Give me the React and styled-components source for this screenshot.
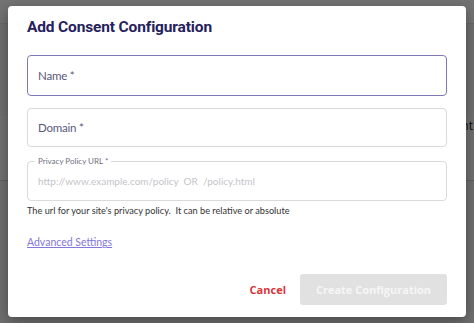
import React from "react";
import styled, { createGlobalStyle } from "styled-components";

const Global = createGlobalStyle`
  html, body { margin: 0; padding: 0; }
  body { width: 474px; height: 323px; overflow: hidden; font-family: Lato, "Noto Sans", sans-serif; }
  * { box-sizing: border-box; }
`;

const Page = styled.div`
  position: relative;
  width: 474px;
  height: 323px;
  background: #f6f6f6;
  display: flex;
  flex-direction: column;
  overflow: hidden;
`;

const TopBar = styled.div`
  height: 24px;
  background: #ffffff;
  border-bottom: 1px solid #e6e6e6;
`;

const Content = styled.div`
  flex: 1;
  display: flex;
  flex-direction: column;
  padding-top: 92px;
`;

const BgRow = styled.div`
  height: 65px;
  padding-right: 1px;
  padding-top: 3px;
  display: flex;
  justify-content: flex-end;
  align-items: flex-start;
  font-family: "Open Sans", sans-serif;
  font-size: 12px;
  line-height: 14px;
  color: #222;
  border-bottom: 1px solid #d8d8d8;
  white-space: nowrap;
  background: #fbfbfb;
`;

const Backdrop = styled.div`
  position: absolute;
  inset: 0;
  background: rgba(0, 0, 0, 0.55);
`;

const Modal = styled.div`
  position: absolute;
  left: 8px;
  top: 6px;
  width: 458px;
  height: 311px;
  background: #ffffff;
  border-radius: 4px;
  box-shadow: 0 4px 14px rgba(0, 0, 0, 0.35);
  padding: 10px 19px 12px 19px;
  display: flex;
  flex-direction: column;
`;

const Title = styled.h2`
  margin: 0;
  font-family: Roboto, "Noto Sans", sans-serif;
  font-weight: 700;
  font-size: 15.5px;
  line-height: 22px;
  letter-spacing: -0.15px;
  color: #25215c;
`;

const Field = styled.div`
  height: ${(p) => p.$h || 39}px;
  margin-top: ${(p) => p.$mt || 0}px;
  border: 1px solid ${(p) => (p.$focus ? "#7c79b6" : "#dadada")};
  border-radius: 4px;
  display: flex;
  align-items: center;
  padding: 0 10px;
`;

const FieldLabel = styled.span`
  font-size: 11.5px;
  color: #5a587a;
  letter-spacing: -0.2px;
`;

const Fieldset = styled.fieldset`
  margin: 10px 0 0 0;
  height: 44px;
  border: 1px solid #dadada;
  border-radius: 4px;
  padding: 0 10px;
  min-width: 0;
`;

const Legend = styled.legend`
  font-size: 8px;
  color: #6e6e7e;
  padding: 0 3px;
  margin-left: -3px;
  line-height: 8px;
`;

const Input = styled.input`
  display: block;
  border: none;
  outline: none;
  width: 100%;
  height: 32px;
  padding: 0;
  font-family: Lato, "Noto Sans", sans-serif;
  font-size: 10px;
  background: transparent;
  &::placeholder {
    color: #c4c4c8;
    white-space: pre;
  }
`;

const Helper = styled.div`
  margin-top: 4px;
  font-size: 9.2px;
  line-height: 12px;
  color: #333;
  white-space: pre;
`;

const Link = styled.a`
  margin-top: 18px;
  font-size: 10.5px;
  line-height: 14px;
  color: #8377dd;
  text-decoration: underline;
  align-self: flex-start;
  cursor: pointer;
`;

const Actions = styled.div`
  margin-top: auto;
  display: flex;
  justify-content: flex-end;
  align-items: center;
  gap: 14px;
`;

const TextButton = styled.button`
  border: none;
  background: transparent;
  font-family: "Open Sans", sans-serif;
  font-weight: 700;
  font-size: 11px;
  color: #d8353a;
  padding: 0;
`;

const PrimaryButton = styled.button`
  width: 147px;
  height: 31px;
  border: none;
  border-radius: 3px;
  background: #e1e1e1;
  color: #f6f6f6;
  font-family: "Open Sans", sans-serif;
  font-weight: 700;
  font-size: 11px;
  padding: 0;
`;

export default function App() {
  return (
    <>
      <Global />
      <Page>
        <TopBar />
        <Content>
          <BgRow>Consent</BgRow>
        </Content>
        <Backdrop />
        <Modal>
          <Title>Add Consent Configuration</Title>
          <Field $focus $h={41} $mt={17}>
            <FieldLabel>Name *</FieldLabel>
          </Field>
          <Field $mt={12}>
            <FieldLabel>Domain *</FieldLabel>
          </Field>
          <Fieldset>
            <Legend>Privacy Policy URL *</Legend>
            <Input placeholder="http://www.example.com/policy  OR  /policy.html" />
          </Fieldset>
          <Helper>The url for your site's privacy policy.  It can be relative or absolute</Helper>
          <Link>Advanced Settings</Link>
          <Actions>
            <TextButton>Cancel</TextButton>
            <PrimaryButton>Create Configuration</PrimaryButton>
          </Actions>
        </Modal>
      </Page>
    </>
  );
}
